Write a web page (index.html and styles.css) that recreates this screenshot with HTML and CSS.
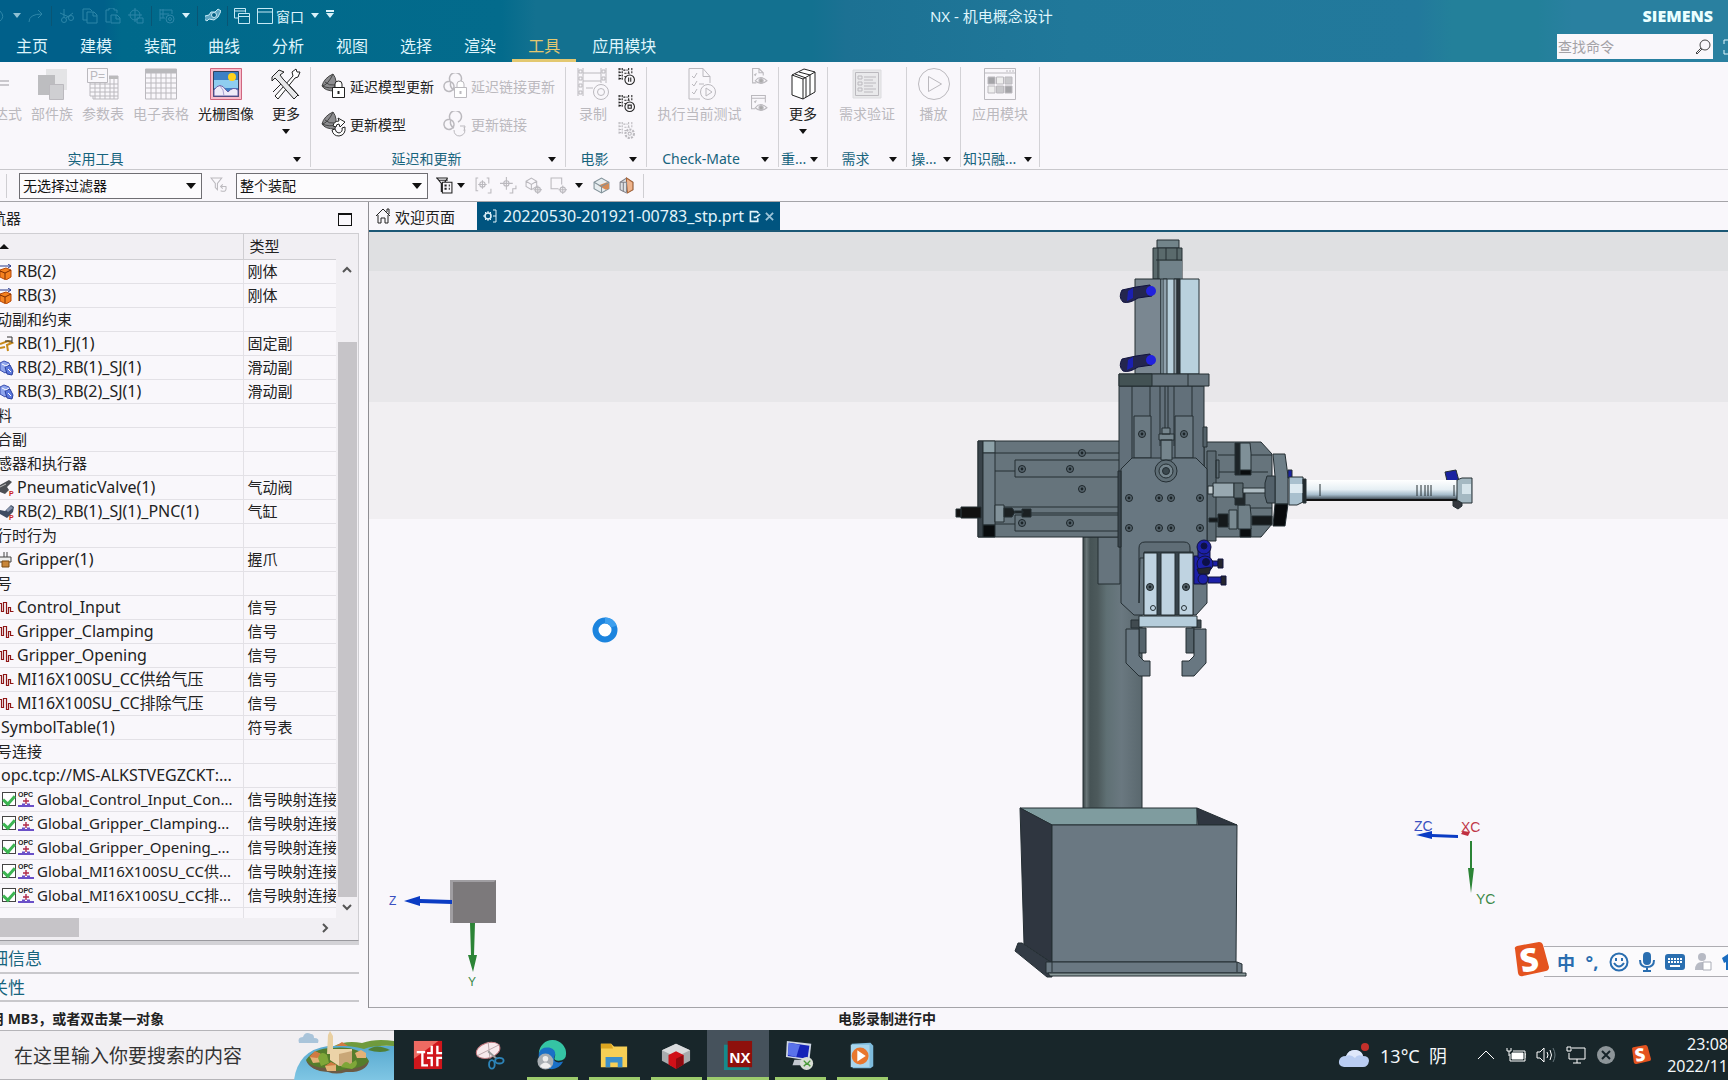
FILE: index.html
```html
<!DOCTYPE html>
<html lang="zh-CN">
<head>
  <meta charset="utf-8">
  <title>NX - 机电概念设计</title>
  <link rel="stylesheet" href="styles.css">
</head>
<body>

  <!-- shared icons -->
  <svg class="defs" width="0" height="0" aria-hidden="true">
    <symbol id="i-body" viewBox="0 0 16 16">
      <path d="M0 2h11M8 0l3 2-3 2" fill="none" stroke="#2b3a8c"/>
      <path d="M0 6l6-2 5 2v7l-5 3-6-3z" fill="#f58220" stroke="#b5480a"/>
      <path d="M0 7l5 2v6M5 9l6-3" fill="none" stroke="#7a2c00"/>
    </symbol>
    <symbol id="i-slide" viewBox="0 0 16 16">
      <path d="M0 3l4-2 5 2 1 6-5 4-5-3z" fill="#8fa5ec" stroke="#3a4fb0"/>
      <path d="M5 7l5-2 3 6-1 4-5-1z" fill="#5b78dd" stroke="#2b3f9c"/>
      <path d="M2 4l4 2 3-2M8 9l3 3" fill="none" stroke="#fff"/>
    </symbol>
    <symbol id="i-signal" viewBox="0 0 16 16">
      <path d="M0 3.500h1.500v8h2v-9h3v11h2v-6h2v4h3" fill="none" stroke="#8e1616" stroke-width="1.200"/>
    </symbol>
    <symbol id="i-opc" viewBox="0 0 16 16">
      <text x="0" y="6">OPC</text>
      <path d="M8 7v6M5 10h6" stroke="#b02a4a" stroke-width="1.400"/>
      <path d="M0 15h16M4 13.500h3M9 13.500h3" stroke="#6a4fc8" stroke-width="2"/>
    </symbol>
    <symbol id="i-film" viewBox="0 0 16 16">
      <path d="M1 0v12M4 0v12M1 1h3M1 4h3M1 7h3M1 10h3M6 5h6M13 0v6M10 0v5M5 2h4M6 8h2" fill="none" stroke="currentColor" stroke-dasharray="2 1"/>
    </symbol>
    <symbol id="i-mass" viewBox="0 0 26 26">
      <path d="M12 1q5 6 2 17Q4 18 1 13q2-8 11-12z" fill="#8d8d90" stroke="#444"/>
      <path d="M1 13q6-1 11-12M4 9q4 4 10 3M1 13q8 3 13 1" fill="none" stroke="#444"/>
    </symbol>
    <symbol id="i-links" viewBox="0 0 26 26">
      <path d="M8 8a6 6 0 1 1 8 3M2 14a5 5 0 1 1 7 4 5 5 0 0 1-7-4zM9 9a6 6 0 0 0 3 8" fill="none" stroke="currentColor" stroke-width="1.500"/>
    </symbol>
  </svg>

  <header class="top">
    <div class="title-row">
      <div class="qat">
        <button class="q-btn undo" aria-label="撤消"><svg viewBox="0 0 16 16"><path d="M10 3q6 6-1 11"/></svg></button>
        <i class="caret dim"></i>
        <button class="q-btn faint" aria-label="重做"><svg viewBox="0 0 16 16"><path d="M1 14Q1 6 14 6M10 2l4 4-4 4"/></svg></button>
        <i class="q-sep"></i>
        <button class="q-btn faint" aria-label="剪切"><svg viewBox="0 0 16 16"><path d="M1 5l9 4M5 1v8"/><circle cx="12" cy="10" r="2.500"/><circle cx="5" cy="12" r="2.500"/><path d="M7 10l7-5"/></svg></button>
        <button class="q-btn faint" aria-label="复制"><svg viewBox="0 0 16 16"><path d="M5 12H1V1h7l2 2M5 4h7l3 3v8H5zM11 4v4h4"/></svg></button>
        <button class="q-btn faint" aria-label="粘贴"><svg viewBox="0 0 16 16"><path d="M5 14H1V2h3V0h5v2h3v3M6 7h6l3 3v5H6zM11 7v4h4"/></svg></button>
        <button class="q-btn faint" aria-label="删除"><svg viewBox="0 0 16 16"><circle cx="7" cy="7" r="5"/><path d="M7 0v14M0 7h14M9 10h6v5H9z"/></svg></button>
        <i class="q-sep"></i>
        <button class="q-btn faint" aria-label="宏"><svg viewBox="0 0 16 16"><path d="M1 1v12M4 1v9M1 2h12v4M1 6h9M1 10h5"/><circle cx="11" cy="11" r="4"/><circle cx="11" cy="11" r="1.500"/></svg></button>
        <i class="caret"></i>
        <i class="q-sep"></i>
        <button class="q-btn" aria-label="触控"><svg viewBox="0 0 16 16"><path d="M0 8l4-1 2-3h4l3-3 3 2-3 6-4 3-5-1-2 2-3-2z" fill="#5fa6c2"/><circle cx="9" cy="7" r="2.500" fill="#045f83"/></svg></button>
        <i class="q-sep tight"></i>
        <button class="q-btn" aria-label="切换窗口"><svg viewBox="0 0 16 16"><path d="M4 10H.5V.5h11v4M.5 3h11M4.500 5.500h11v10h-11zM4.500 8.500h11" /></svg></button>
        <button class="q-btn wide"><svg viewBox="0 0 16 16"><path d="M.5.5h15v15H.5zM.5 4h15"/></svg>窗口</button>
        <i class="caret"></i>
        <i class="caret line"></i>
      </div>
      <h1 class="app-title">NX - 机电概念设计</h1>
      <div class="brand">SIEMENS</div>
    </div>
    <div class="tab-row">
      <nav class="tabs">
        <a href="#">主页</a>
        <a href="#">建模</a>
        <a href="#">装配</a>
        <a href="#">曲线</a>
        <a href="#">分析</a>
        <a href="#">视图</a>
        <a href="#">选择</a>
        <a href="#">渲染</a>
        <a href="#" class="active">工具</a>
        <a href="#">应用模块</a>
      </nav>
      <form class="find">
        <input type="text" placeholder="查找命令" aria-label="查找命令">
        <svg viewBox="0 0 16 16"><circle cx="10" cy="6" r="5"/><path d="M6 9l-5 5 1 1 5-5"/></svg>
      </form>
      <button class="full" aria-label="全屏"><svg viewBox="0 0 16 16"><path d="M5 1H1v4M1 11v4h4"/></svg></button>
    </div>
  </header>

  <section class="ribbon">
    <div class="group g-util">
      <div class="items">
        <button class="big off expr" disabled><svg viewBox="0 0 32 32"><path d="M0 13h32M0 17h32" stroke-width="1.500"/></svg>达式</button>
        <button class="big off" disabled><svg viewBox="0 0 32 32"><path d="M10 1h21v21H10z" fill="#e4e4e6" stroke="none"/><path d="M2 7h17v20H2z" fill="#bdbdc0" stroke="none"/><path d="M13.500 16.500h14v15h-14z" fill="#cfcfd2"/></svg>部件族</button>
        <button class="big off" disabled><svg viewBox="0 0 32 32"><path d="M22 8h9v3h-9z" fill="#bbb" stroke="none"/><path d="M3 12v16h3v3h25V8h-9M3 16h28M3 20h28M3 24h28M6 28h25M8 14v17M13 14v17M18 14v17M23 8v23M27 8v23"/><path d="M.5.5h20v14H.5z" fill="#f9f7fb"/><text x="3" y="12">P=</text></svg>参数表</button>
        <button class="big off" disabled><svg viewBox="0 0 32 32"><path d="M.5 1h31v4H.5z" fill="#b9b9bc"/><path d="M.5 5v26h31V5M.5 10h31M.5 15h31M.5 20h31M.5 25h31M6 5v26M11 5v26M16 5v26M21 5v26M26 5v26"/></svg>电子表格</button>
        <button class="big"><svg viewBox="0 0 32 32"><path d="M.5.5h31v31H.5z" fill="#f8bccb" stroke="#d0667f"/><path d="M3.500 3.500h25v25h-25z" fill="#3d80c4" stroke="#33405c"/><path d="M4 12h24v8H4z" fill="#8fcdf0" stroke="none"/><circle cx="22" cy="9" r="4" fill="#ffd21c" stroke="none"/><path d="M4 28v-6q6-9 12 0 1 1 2 2 5-6 10-2v6z" fill="#eeebf8" stroke="#6a5fa8"/><path d="M10 18q4 3 4 10" stroke="#a9a0d0"/></svg>光栅图像</button>
        <button class="big more"><svg viewBox="0 0 32 32"><path d="M5 28L23 8l-1-4 4-3 1 3 3 0-2 5-3 1L8 31z" fill="#fff"/><path d="M2 9l7-7 5 2-4 3 3 4 15 16-4 4L9 14 5 10 2 13z" fill="#e8e8ea"/><path d="M3 24l8-8M19 17l10 11"/></svg>更多<i class="caret dark"></i></button>
      </div>
      <div class="g-label"><span>实用工具</span><i class="caret dark"></i></div>
    </div>

    <div class="group g-delay">
      <div class="items two">
        <button class="row"><svg viewBox="0 0 26 26"><use href="#i-mass"/><path d="M11.500 14.500h12v10h-12zM14 14v-3q0-3 3.500-3t3.500 3v3" fill="#fff"/><path d="M17.500 18v3" stroke-width="2"/></svg>延迟模型更新</button>
        <button class="row off" disabled><svg viewBox="0 0 26 26"><use href="#i-links"/><path d="M12.500 14.500h12v10h-12zM15 14v-3q0-3 3.500-3t3.500 3v3" fill="#fff"/><path d="M18.500 18v3" stroke-width="2"/></svg>延迟链接更新</button>
        <button class="row"><svg viewBox="0 0 26 26"><use href="#i-mass"/><path d="M12 15q1-5 6-5l-1-3 7 4-5 5-1-3q-3 0-3 3zM24 16q1 8-6 9-6 0-7-6l3-1q1 4 4 4 4-1 3-5z" fill="#fff"/></svg>更新模型</button>
        <button class="row off" disabled><svg viewBox="0 0 26 26"><use href="#i-links"/><path d="M22 16q3 7-4 9-6 0-6-6M18 15l5 0-1 5"/></svg>更新链接</button>
      </div>
      <div class="g-label"><span>延迟和更新</span><i class="caret dark"></i></div>
    </div>

    <div class="group g-movie">
      <div class="items">
        <button class="big off" disabled><svg viewBox="0 0 32 32"><path d="M1 0v28M6 0v28M24 0v15M29 0v15M6 13h18M6 5h18" /><path d="M2 2h3v3H2zM2 9h3v3H2zM2 16h3v3H2zM2 23h3v3H2zM25 2h3v3h-3zM25 9h3v3h-3zM9 20h7"/><circle cx="24" cy="24" r="7.500" fill="#f9f7fb"/><circle cx="24" cy="24" r="3.500"/></svg>录制</button>
        <div class="smalls">
          <button class="small" aria-label="暂停"><svg viewBox="0 0 16 16"><use href="#i-film"/><circle cx="11" cy="11" r="4.500" fill="#f9f7fb"/><path d="M10 9v4M12 9v4"/></svg></button>
          <button class="small" aria-label="停止"><svg viewBox="0 0 16 16"><use href="#i-film"/><circle cx="11" cy="11" r="4.500" fill="#f9f7fb"/><path d="M9.500 9.500h3v3h-3z"/></svg></button>
          <button class="small off" aria-label="设置" disabled><svg viewBox="0 0 16 16"><use href="#i-film"/><circle cx="11" cy="11" r="4" fill="#f9f7fb" stroke-width="2" stroke-dasharray="2 1"/><circle cx="11" cy="11" r="1.500"/></svg></button>
        </div>
      </div>
      <div class="g-label"><span>电影</span><i class="caret dark"></i></div>
    </div>

    <div class="group g-check">
      <div class="items">
        <button class="big off" disabled><svg viewBox="0 0 32 32"><path d="M16 31H5V.5h14l7 8V15M19 .5v8h7M8 8l2 2 3-5M8 16l2 2 3-5M8 24l2 2 3-5M15 16h5"/><circle cx="24" cy="24" r="7.500" fill="#f9f7fb"/><path d="M22 20v8l6-4z"/></svg>执行当前测试</button>
        <div class="smalls">
          <button class="small off" aria-label="查看结果" disabled><svg viewBox="0 0 16 16"><path d="M5 14H1.500V.5h6l4 4V7M7.500.5v4h4M3 6l1 1 1-2"/><path d="M4 12q5-6 11 0-6 5-11 0z" fill="#f9f7fb"/><circle cx="9.500" cy="12" r="2" fill="#aaa"/></svg></button>
          <button class="small off" aria-label="显示结果" disabled><svg viewBox="0 0 16 16"><path d="M4 13H.5V.5h13V7M.5 3h13M3 6l1 1 1-2"/><path d="M4 12q5-6 11 0-6 5-11 0z" fill="#f9f7fb"/><circle cx="9.500" cy="12" r="2" fill="#aaa"/></svg></button>
        </div>
      </div>
      <div class="g-label"><span>Check-Mate</span><i class="caret dark"></i></div>
    </div>

    <div class="group g-reuse">
      <div class="items">
        <button class="big more"><svg viewBox="0 0 32 32"><path d="M5 7L17 1l11 3v20l-12 7L5 27z" fill="#fff"/><path d="M5 7l11 4v20M16 11l12-7M8 6l11 4M12 4l11 3M19 10v19M23 7v20" /></svg>更多<i class="caret dark"></i></button>
      </div>
      <div class="g-label"><span>重...</span><i class="caret dark"></i></div>
    </div>

    <div class="group g-req">
      <div class="items">
        <button class="big off" disabled><svg viewBox="0 0 32 32"><path d="M2 2h28v28H2z" fill="#e9e9eb" stroke="#dcdcdf"/><path d="M4.500 4.500h23v23h-23zM7 8h4v3H7zM7 14h4v3H7zM7 20h4v3H7zM13 9h12M13 12h9M13 15h12M13 18h9M13 21h12M13 24h9"/></svg>需求验证</button>
      </div>
      <div class="g-label"><span>需求</span><i class="caret dark"></i></div>
    </div>

    <div class="group g-play">
      <div class="items">
        <button class="big off" disabled><svg viewBox="0 0 32 32"><circle cx="16" cy="16" r="15.500"/><path d="M10.500 8.500v15l13-7.500z"/></svg>播放</button>
      </div>
      <div class="g-label"><span>操...</span><i class="caret dark"></i></div>
    </div>

    <div class="group g-know">
      <div class="items">
        <button class="big off" disabled><svg viewBox="0 0 32 32"><path d="M.5.5h31v31H.5zM.5 5h31M22 3h2M25 3h2M28 3h2"/><path d="M4 9h7v7H4zM21 18h7v7h-7z" fill="#a4a4a8"/><path d="M12.500 18h7v7h-7z" fill="#c8c8cb"/><path d="M21 9h7v7h-7z" fill="#c8c8cb"/><path d="M12.500 9h7v7h-7zM4 18h7v7H4z" fill="#eee"/></svg>应用模块</button>
      </div>
      <div class="g-label"><span>知识融...</span><i class="caret dark"></i></div>
    </div>
  </section>

  <section class="filters">
    <i class="f-sep"></i>
    <span class="combo"><select aria-label="选择过滤器"><option>无选择过滤器</option></select></span>
    <button class="small off" aria-label="重置过滤器" disabled><svg viewBox="0 0 16 16"><path d="M1 1h10L7 6v6l-2-2V6zM10 13q6 2 5-4l-4 0M12 7l-2 2 2 2"/></svg></button>
    <span class="combo scope"><select aria-label="选择范围"><option>整个装配</option></select></span>
    <div class="f-tools">
      <button class="small" aria-label="常规选择过滤器"><svg viewBox="0 0 16 16"><path d="M0 1h11M1 1l4 5v8M11 1L8 5M3 3h8M6 5h9v10H6z"/><path d="M8 8h2M8 11h2M12 8h1M12 11h1" stroke-width="2"/></svg></button>
      <i class="caret dark"></i>
      <button class="small off" aria-label="选择意图" disabled><svg viewBox="0 0 16 16"><path d="M3 1H1v12h2M11 1h2v5M7 3v8M3 7h8M15 11v4h-3"/><circle cx="7" cy="7" r="2.500"/></svg></button>
      <button class="small off" aria-label="捕捉点" disabled><svg viewBox="0 0 16 16"><path d="M6 0v12M0 6h12M15 8v3h-3v4H9"/><circle cx="6" cy="6" r="2.500"/></svg></button>
      <button class="small off" aria-label="体过滤" disabled><svg viewBox="0 0 16 16"><path d="M1 4l5-3 5 3v5l-5 3-5-3zM1 4l5 3 5-3M6 7v5"/><circle cx="12" cy="12" r="2.500" fill="#eee"/><path d="M12 8v8M8 12h8"/></svg></button>
      <button class="small off" aria-label="矩形选择" disabled><svg viewBox="0 0 16 16"><path d="M8 11H1V1h10v6"/><circle cx="12" cy="12" r="2.500"/><path d="M12 8v8M8 12h8"/></svg></button>
      <i class="caret dark"></i>
    </div>
    <button class="small" aria-label="截面"><svg viewBox="0 0 16 16"><path d="M1 5l7-4 7 4v6l-7 4-7-4z" fill="#e6edf0" stroke="#83929a"/><path d="M5 8l8-3 2 1v5l-3 1z" fill="#d58b55" stroke="none"/><path d="M1 5l7 4v6M8 9l7-4" stroke="#83929a"/></svg></button>
    <button class="small" aria-label="编辑截面"><svg viewBox="0 0 16 16"><path d="M2 5l6-4 6 4v7l-6 3-6-3z" fill="#dfe1e4" stroke="#83838a"/><path d="M8 6V1l6 4v7l-5 3z" fill="#efb48c" stroke="#a8663a"/><path d="M2 5h6v9M5 5v9" stroke="#83838a"/></svg></button>
    <i class="f-sep"></i>
  </section>

  <main class="work">
    <aside class="nav">
      <div class="nav-title"><h2>航器</h2><button aria-label="最大化"></button></div>
      <div class="tree">
        <div class="tree-view">
          <table>
            <colgroup><col class="c-name"><col></colgroup>
            <thead><tr><th><i class="sort"></i></th><th>类型</th></tr></thead>
            <tbody>
              <tr><td><svg><use href="#i-body"/></svg>RB(2)</td><td>刚体</td></tr>
              <tr><td><svg><use href="#i-body"/></svg>RB(3)</td><td>刚体</td></tr>
              <tr class="folder"><td>动副和约束</td><td></td></tr>
              <tr><td><svg viewBox="0 0 16 16"><path d="M0 8l8-3 4 2-5 2 1 6M0 12l5-1" fill="none" stroke="#c78a1a" stroke-width="2"/><path d="M7 1h5v6M5 5h7" fill="none" stroke="#333"/></svg>RB(1)_FJ(1)</td><td>固定副</td></tr>
              <tr><td><svg><use href="#i-slide"/></svg>RB(2)_RB(1)_SJ(1)</td><td>滑动副</td></tr>
              <tr><td><svg><use href="#i-slide"/></svg>RB(3)_RB(2)_SJ(1)</td><td>滑动副</td></tr>
              <tr class="folder"><td>料</td><td></td></tr>
              <tr class="folder"><td>合副</td><td></td></tr>
              <tr class="folder"><td>感器和执行器</td><td></td></tr>
              <tr><td><svg viewBox="0 0 16 16"><path d="M0 5l9-5 3 2-5 5 2 3-4 4-5-2z" fill="#4c4f54"/><path d="M0 7l6-3" stroke="#bbb"/><text class="p" x="9" y="16">P</text></svg>PneumaticValve(1)</td><td>气动阀</td></tr>
              <tr><td><svg viewBox="0 0 16 16"><path d="M0 6l5 1 6-6 3 2-1 5-6 6-7-4z" fill="#3f4d63"/><path d="M6 6l5-4 2 2-5 4z" fill="#8794ad"/><text class="p" x="9" y="16">P</text></svg>RB(2)_RB(1)_SJ(1)_PNC(1)</td><td>气缸</td></tr>
              <tr class="folder"><td>行时行为</td><td></td></tr>
              <tr><td><svg viewBox="0 0 16 16"><path d="M4 0v5M7 0v5M0 5h11v5H0" fill="#eee" stroke="#444"/><path d="M2 9h7v6H2z" fill="#c8853a" stroke="#7a4a12"/></svg>Gripper(1)</td><td>握爪</td></tr>
              <tr class="folder"><td>号</td><td></td></tr>
              <tr><td><svg><use href="#i-signal"/></svg>Control_Input</td><td>信号</td></tr>
              <tr><td><svg><use href="#i-signal"/></svg>Gripper_Clamping</td><td>信号</td></tr>
              <tr><td><svg><use href="#i-signal"/></svg>Gripper_Opening</td><td>信号</td></tr>
              <tr><td><svg><use href="#i-signal"/></svg>MI16X100SU_CC供给气压</td><td>信号</td></tr>
              <tr><td><svg><use href="#i-signal"/></svg>MI16X100SU_CC排除气压</td><td>信号</td></tr>
              <tr class="plain"><td>SymbolTable(1)</td><td>符号表</td></tr>
              <tr class="folder"><td>号连接</td><td></td></tr>
              <tr class="plain"><td>opc.tcp://MS-ALKSTVEGZCKT:...</td><td></td></tr>
              <tr class="link"><td><label><input type="checkbox" checked><svg><use href="#i-opc"/></svg>Global_Control_Input_Con...</label></td><td>信号映射连接</td></tr>
              <tr class="link"><td><label><input type="checkbox" checked><svg><use href="#i-opc"/></svg>Global_Gripper_Clamping...</label></td><td>信号映射连接</td></tr>
              <tr class="link"><td><label><input type="checkbox" checked><svg><use href="#i-opc"/></svg>Global_Gripper_Opening_...</label></td><td>信号映射连接</td></tr>
              <tr class="link"><td><label><input type="checkbox" checked><svg><use href="#i-opc"/></svg>Global_MI16X100SU_CC供...</label></td><td>信号映射连接</td></tr>
              <tr class="link"><td><label><input type="checkbox" checked><svg><use href="#i-opc"/></svg>Global_MI16X100SU_CC排...</label></td><td>信号映射连接</td></tr>
              <tr class="rest"><td></td><td></td></tr>
            </tbody>
          </table>
        </div>
        <div class="vscroll">
          <svg viewBox="0 0 10 8"><path d="M1 6l4-4 4 4"/></svg>
          <div class="v-thumb"></div>
          <svg viewBox="0 0 10 8"><path d="M1 2l4 4 4-4"/></svg>
        </div>
      </div>
      <div class="hscroll"><div class="h-thumb"></div><svg viewBox="0 0 8 10"><path d="M2 1l4 4-4 4"/></svg></div>
      <a href="#" class="fold">细信息</a>
      <a href="#" class="fold">关性</a>
    </aside>

    <section class="doc">
      <div class="doc-tabs">
        <a href="#" class="d-tab"><svg viewBox="0 0 16 16"><path d="M1 8l7-7 7 7M3 7v8h3v-5h4v5h3V7M12 4V1h2v5"/></svg>欢迎页面</a>
        <a href="#" class="d-tab active"><svg viewBox="0 0 16 16"><circle cx="5" cy="8" r="3" stroke-width="1.500"/><path d="M5 3v2M5 11v2M0 8h2M2 4l1 1M2 12l1-1M8 4L7 5M8 12l-1-1M10 2h3v12h-3M10 8h3"/></svg>20220530-201921-00783_stp.prt<svg class="edit" viewBox="0 0 16 16"><path d="M12 10v4H3V2h8l2 2M7 9h3l5-4" stroke-width="2"/></svg><svg class="close" viewBox="0 0 10 10"><path d="M1 1l8 8M9 1L1 9" stroke-width="2"/></svg></a>
      </div>
      <div class="canvas">
        <svg class="scene" viewBox="369 232 1359 774" preserveAspectRatio="xMinYMin meet">
          <defs>
            <linearGradient id="tube" x1="0" x2="0" y1="0" y2="1"><stop offset="0" stop-color="#fff"/><stop offset=".45" stop-color="#e6eff4"/><stop offset=".7" stop-color="#a6bccb"/><stop offset=".88" stop-color="#55626c"/><stop offset=".9" stop-color="#111"/></linearGradient>
            <linearGradient id="post"><stop offset="0" stop-color="#3b4648"/><stop offset=".06" stop-color="#6a7678"/><stop offset=".12" stop-color="#465355"/><stop offset=".25" stop-color="#4d5a5c"/><stop offset=".4" stop-color="#5f7074"/><stop offset=".65" stop-color="#6a7880"/><stop offset="1" stop-color="#5a686e"/></linearGradient>
            <g id="hole"><circle r="3.500" fill="#56646c" stroke="#1c2529"/><circle r="1.400" fill="#1c2529"/></g>
          </defs>
          <g stroke="#242e33" stroke-width="1">
            <!-- post and base box -->
            <path d="M1083 537h59v272h-59z" fill="url(#post)"/>
            <path d="M1098 537h22v47h-22z" fill="#66747d"/>
            <path d="M1020 808h177v17h-145z" fill="#7f9c9f"/>
            <path d="M1197 808l40 17h-39zM1020 808l32 17v138l-28-19z" fill="#2f3640"/>
            <path d="M1015 951l3-8h4l30 20v14h-5z" fill="#333b45"/>
            <path d="M1052 825h185l-1 137h-184z" fill="#6a7882"/>
            <path d="M1046 962h191l5 2v9h-196z" fill="#6a7882"/>
            <path d="M1048 973h198v3h-196z" fill="#8b9a9b"/>
            <path d="M1052 962v10M1237 962v10" fill="none"/>

            <!-- left beam -->
            <path d="M978 441h142v96H978z" fill="#66747c"/>
            <path d="M978 441h5v96h-5z" fill="#39434a"/>
            <path d="M983 441h12v12h-12z" fill="#8ea2a9"/>
            <path d="M983 453h12v72h-12z" fill="#6c7b84"/>
            <path d="M983 525h12v12h-12z" fill="#090c0e"/>
            <path d="M995 453h125M995 471h20M995 507h125M995 524h20M1030 513h90" fill="none"/>
            <path d="M1015 460h105v17h-105zM1015 515h105v16h-105z" fill="#66747c"/>
            <path d="M956 509h5v8h-5zM961 507h20v11h-20z" fill="#111"/>
            <path d="M995 505h9v17h-9z" fill="#82929a"/>
            <path d="M1004 508h8l3 4-3 5h-8zM1015 511h8v2h-8zM1022 509h9v8h-9z" fill="#1b2022"/>

            <!-- right beam -->
            <path d="M1204 442h57l11 12v70l-11 13h-57z" fill="#66747c"/>
            <path d="M1218 455h54M1218 472h18M1250 472h18M1250 508h22M1218 524h18" fill="none"/>
            <path d="M1207 451h9v90h-9zM1216 460h3v18h-3z" fill="#5c6a72"/>
            <path d="M1235 443h5v32h-5z" fill="#1d2428"/>
            <path d="M1240 443h10l1 10v18h-11z" fill="#7f9098"/>
            <path d="M1240 470h11v5h-11zM1240 528h11v9h-11z" fill="#0a0d0f"/>
            <path d="M1238 505h12l1 10v14h-13z" fill="#6f7f87"/>
            <path d="M1235 490h10v15h-10z" fill="#20272a"/>
            <path d="M1213 483h21v14h-21z" fill="#98a8b0"/>
            <path d="M1208 486h5v8h-5z" fill="#c2ccd0"/>
            <path d="M1234 483h9v15h-9z" fill="#5a686e"/>
            <path d="M1243 488h25v5h-25z" fill="#aebcc3"/>
            <path d="M1273 454h12l3 22v28h-13v-28z" fill="#6e7e87"/>
            <path d="M1275 504h13l-3 22h-12z" fill="#080a0c"/>
            <path d="M1267 476h8v27h-8l-2-7v-13z" fill="#53616a"/>
            <path d="M1209 518h9v4h-9zM1218 514h10v13h-10zM1252 516h20v9h-20z" fill="#15191b"/>
            <path d="M1229 510h8v19h-8z" fill="#7a8a92"/>

            <!-- pushed-out cylinder -->
            <path d="M1288 470h4v8h-4zM1445 472l11-2 3 11h-12z" fill="#1a22a0"/>
            <path d="M1306 480h151v21h-151z" fill="url(#tube)" stroke="none"/>
            <path d="M1289 477h14v25l-6 3h-8z" fill="#a9c0ce"/>
            <path d="M1290 484h13v9h-13z" fill="#dce9f0" stroke="none"/>
            <path d="M1303 479h3v24h-3z" fill="#222a2e"/>
            <path d="M1320 484v12M1417 485v11M1421 485v11M1425 485v11M1428 485v11M1431 485v11M1454 485v11" fill="none"/>
            <path d="M1453 501h9v5l-4 3-5-3z" fill="#35383f"/>
            <path d="M1457 480l5-2h10v25h-10l-5-3z" fill="#a4b8c2"/>
            <path d="M1462 484h9v10h-9z" fill="#d5e3ea" stroke="none"/>

            <!-- vertical axis: rod end, cylinder, plate, guide -->
            <path d="M1157 240h22v8h-22z" fill="#72848a"/>
            <path d="M1153 248h29v31h-29z" fill="#5a6a6c"/>
            <path d="M1156 260h26M1158 248v31M1166 248v12M1177 248v12" fill="none"/>
            <path d="M1160 261h22v18h-22z" fill="#71828a" stroke="none"/>
            <path d="M1135 279h26v95h-26z" fill="#7a8791"/>
            <path d="M1161 279h38v95h-38z" fill="#b9d1dd"/>
            <path d="M1163 279h4v95h-4z" fill="#8fa1ac"/>
            <path d="M1174 279h3v95h-3z" fill="#8c9ba4"/>
            <path d="M1177 279h3v95h-3z" fill="#2c343b"/>
            <path d="M1119 386h85v161h-85z" fill="#62707a"/>
            <path d="M1132 386v72M1150 386v30M1160 386v60M1165 386v42M1168 386v42M1174 386v60M1192 386v72" fill="none"/>
            <path d="M1203 427h4v20h-4z" fill="#54626a"/>
            <path d="M1134 416h17v42h-17zM1175 416h18v42h-18z" fill="#6a7982"/>
            <path d="M1119 374h90v12h-90z" fill="#66747d"/>
            <path d="M1119 374h33v12h-33z" fill="#435254"/>
            <path d="M1188 374v12" fill="none"/>

            <!-- front plate -->
            <path d="M1121 469l11-11h64l11 11v134l-11 12h-62l-13-12z" fill="#687781"/>
            <path d="M1118 471h3v76h-3z" fill="#38434a"/>
            <path d="M1162 428h8v6h-8zM1159 434h15v6h-15zM1161 440h11v20h-11z" fill="#75858d"/>
            <circle cx="1166" cy="471" r="11" fill="#5f6e76"/>
            <circle cx="1166" cy="471" r="7" fill="#74848c"/>
            <circle cx="1166" cy="471" r="3.500" fill="#3b484e"/>

            <!-- gripper -->
            <path d="M1139 603v-55q0-6 6-6h39q6 0 6 6v10h-50z" fill="#5f6d76"/>
            <path d="M1144 552h49v63h-49z" fill="#37434b"/>
            <path d="M1144 553h13v62h-13zM1161 553h14v62h-14zM1179 553h14v62h-14z" fill="#bfd3e1"/>
            <path d="M1131 620h9v8h-9zM1192 620h9v8h-9z" fill="#414b50"/>
            <path d="M1139 628h7v25h-7zM1186 628h8v25h-8z" fill="#55636b"/>
            <path d="M1139 616h58v11h-58z" fill="#b6cddb"/>
            <path d="M1126 629h13v27l5 5h6v15h-11l-13-13zM1206 629h-12v27l-5 5h-7v15h12l12-13z" fill="#687781"/>
            <circle cx="1153" cy="608" r="2.500" fill="none"/>
            <circle cx="1184" cy="608" r="2.500" fill="none"/>

            <!-- push-in fittings -->
            <g fill="#1c20a8" stroke="#11133f">
              <path d="M1150 285l-14 2-14 3q-4 7 1 12 6 2 15-4l14-2z" fill="#24264f"/>
              <circle cx="1151" cy="291" r="5" stroke="none" fill="#2222dd"/>
              <path d="M1128 291l5-3v10l-6 3z" stroke="none" fill="#1a1fb0"/>
              <path d="M1150 354l-14 2-14 3q-4 7 1 12 6 2 15-4l14-2z" fill="#24264f"/>
              <circle cx="1151" cy="360" r="5" stroke="none" fill="#2222dd"/>
              <path d="M1128 360l5-3v10l-6 3z" stroke="none" fill="#1a1fb0"/>
              <path d="M1194 556h12v28h-12zM1208 561h10v5h-10zM1208 577h15v6h-15z"/>
              <path d="M1198 546h12v12h-12z"/>
              <circle cx="1204" cy="547" r="7"/>
              <circle cx="1205" cy="564" r="8"/>
              <circle cx="1203" cy="579" r="5"/>
              <path d="M1218 559h5v9h-5zM1221 576h5v9h-5zM1197 569l14-2-2 7h-10z" fill="#25262e"/>
              <circle cx="1204" cy="546" r="3" fill="#0c0f4a"/>
              <circle cx="1206" cy="562" r="3.500" fill="#0c0f4a"/>
            </g>
          </g>
          <use href="#hole" x="1142" y="434"/><use href="#hole" x="1184" y="434"/>
          <use href="#hole" x="1082" y="453"/><use href="#hole" x="1082" y="489"/>
          <use href="#hole" x="1022" y="469"/><use href="#hole" x="1070" y="469"/>
          <use href="#hole" x="1022" y="523"/><use href="#hole" x="1070" y="523"/>
          <use href="#hole" x="1129" y="498"/><use href="#hole" x="1159" y="498"/><use href="#hole" x="1171" y="498"/><use href="#hole" x="1200" y="498"/>
          <use href="#hole" x="1129" y="528"/><use href="#hole" x="1159" y="528"/><use href="#hole" x="1171" y="528"/><use href="#hole" x="1200" y="528"/>
          <use href="#hole" x="1150" y="587"/><use href="#hole" x="1186" y="587"/>

          <!-- view triad -->
          <path d="M450 880h46v43h-46z" fill="#7c797b"/>
          <path d="M450 880h46l-2 2h-41v41h-3z" fill="#a09ea2"/>
          <path d="M404 901l16-5v3l32 1v4l-32-1v3z" fill="#0b3cc4"/>
          <path d="M470 923h5l-1 32h3l-4 17-5-17h3z" fill="#2c8436"/>
          <text x="389" y="905" class="z small-t">Z</text>
          <text x="468" y="986" class="y small-t">Y</text>

          <!-- work coordinate system -->
          <path d="M1416 835l16-4v3l26 1v3l-26-1v2z" fill="#0b3cc4"/>
          <path d="M1463 831l7 1-2 4-7-2z" fill="#c03040"/>
          <path d="M1470 841h2v27h2l-3 25-3-25h2z" fill="#2c8436"/>
          <text x="1414" y="831" class="z">ZC</text>
          <text x="1461" y="832" class="x">XC</text>
          <text x="1476" y="904" class="y">YC</text>

          <!-- busy pointer -->
          <circle cx="605" cy="630" r="9.500" fill="#fff" stroke="#1c84de" stroke-width="6"/>
          <path d="M605 620.500a9.500 9.500 0 0 1 9 6" fill="none" stroke="#3d9fee" stroke-width="6"/>
        </svg>

        <div class="ime">
          <svg class="ime-logo" viewBox="0 0 36 36"><path d="M2 7Q1 5 4 4L26 0q3 0 4 3l6 22q0 3-3 4L10 34q-4 1-5-3z" fill="#e4531f"/><text x="7" y="29" transform="rotate(-10 18 18)">S</text></svg>
          <button class="zh">中</button>
          <button class="punct">°,</button>
          <button aria-label="表情"><svg viewBox="0 0 20 20"><circle cx="10" cy="10" r="8.500"/><path d="M7 6v3M13 6v3M5 11q5 7 10 0"/></svg></button>
          <button aria-label="语音"><svg viewBox="0 0 20 20"><rect x="7" y="1" width="6" height="11" rx="3" fill="#2a6eb0"/><path d="M3 8q0 7 7 7t7-7M10 15v4M6 19h8"/></svg></button>
          <button aria-label="软键盘"><svg viewBox="0 0 20 20"><rect x="1" y="3" width="18" height="14" rx="2" fill="#2a6eb0"/><path d="M3 7h14M3 10h14" stroke="#fff" stroke-dasharray="2 1"/><path d="M5 14h10" stroke="#fff"/></svg></button>
          <button aria-label="账户"><svg viewBox="0 0 20 20"><circle cx="9" cy="5" r="4" fill="#b7bac4" stroke="none"/><path d="M2 18q0-8 7-8t7 8z" fill="#b7bac4" stroke="none"/><path d="M10 10h8v8h-8z" fill="#fff" stroke="#a9acb6" stroke-width="1"/></svg></button>
          <button aria-label="皮肤"><svg viewBox="0 0 20 20"><path d="M1 6l6-4q3 2 6 0l6 4-2 5-2-1v8H5v-8l-2 1z" fill="#1a6cc0" stroke="none"/></svg></button>
        </div>
      </div>
    </section>
  </main>

  <footer class="status">
    <span class="hint">用 MB3，或者双击某一对象</span>
    <span class="msg">电影录制进行中</span>
  </footer>

  <div class="taskbar">
    <div class="search">
      <input type="text" placeholder="在这里输入你要搜索的内容" aria-label="搜索">
      <svg viewBox="0 0 100 49">
        <defs><linearGradient id="sea" x1="0" x2="0" y1="0" y2="1"><stop offset="0" stop-color="#58a9cf"/><stop offset="1" stop-color="#7fc6e4"/></linearGradient></defs>
        <path d="M0 49q4-30 34-34h66v34z" fill="url(#sea)"/>
        <path d="M40 15q12-6 28-3 14-5 32-2v5q-20-1-30 3-16-4-30-3z" fill="#6f9a3d"/>
        <path d="M74 19q8-7 22 0-9 4-22 0z" fill="#4f7f35"/>
        <path d="M12 29q8-12 26-12 28-3 37 13-4 9-24 9-8 4-18 1-16 0-21-11z" fill="#557d2c"/>
        <path d="M12 29q6 8 20 8 10 5 20 1 16 0 23-8-3 12-23 11-10 3-18 0-18-1-22-12z" fill="#6b5a44"/>
        <path d="M34 4l2-4 3 5v18h-6z" fill="#e9d0a2"/><path d="M36 18h22v15l-13 2-9-6z" fill="#ecd3a8"/><path d="M45 23l13-3v13l-13 2z" fill="#c9a777"/>
        <path d="M16 26l6-5 7 3v7l-10 1zM31 35l7-3 4 2v6h-9zM61 22l6-3 5 3v5h-9z" fill="#e3b277"/>
        <path d="M15 26l6-6 8 4-6 3zM42 15l6-4 6 4zM31 35l6-4 6 3z" fill="#d07a42"/>
        <path d="M24 27q3-8 9-3l2 8-8 3zM47 36q4-8 9-3l6-4q3 6-4 9z" fill="#7fa638"/>
        <path d="M5 12q-2-6 4-6 2-6 8-3 3 0 3 4 6 0 4 5z" fill="#a9c4da"/>
      </svg>
    </div>
    <div class="apps">
      <button aria-label="TIA"><svg viewBox="0 0 32 32"><path d="M1 1h30v30H1z" fill="#d0161c"/><path d="M1 1h26L1 20z" fill="#ee6a62"/><path d="M4 13h9M10 13v14h6M20 6v8h-5M26 6v8h5M20 28v-9h-5M26 28v-9h5" stroke="#fff" stroke-width="2.500" fill="none"/></svg></button>
      <button aria-label="截图工具"><svg viewBox="0 0 32 32"><ellipse cx="14" cy="11" rx="13" ry="8" transform="rotate(-18 14 11)" fill="#f7e9ec" stroke="#c77a80"/><path d="M2 17l24-12M14 2l2 18" stroke="#b9a3a8"/><path d="M14 12l9 8" stroke="#999" stroke-width="2"/><ellipse cx="18" cy="26" rx="3" ry="4.500" fill="none" stroke="#2d84b8" stroke-width="2"/><ellipse cx="26" cy="22" rx="4.500" ry="3" fill="none" stroke="#2d84b8" stroke-width="2"/></svg></button>
      <button class="open" aria-label="Edge"><svg viewBox="0 0 32 32"><path d="M2 14A14 14 0 0 1 31 15q0 7-8 7-6 0-4-4 2-6-6-7Q6 10 2 14z" fill="#35c4a4"/><path d="M2 14q2-7 11-6 8 2 6 9-3 6 4 7l5-1q-5 9-14 8Q0 28 2 14z" fill="#1a70c6"/><circle cx="9" cy="23" r="8.500" fill="#a7adb2"/><circle cx="9" cy="20" r="3" fill="#eee"/><path d="M3 28q6-8 12 0-6 5-12 0z" fill="#eee"/></svg></button>
      <button class="open" aria-label="文件资源管理器"><svg viewBox="0 0 32 32"><path d="M2 4h11l3 3h14v22H2z" fill="#f7cf55"/><path d="M2 4h11l2 5H2z" fill="#dca520"/><path d="M7 29V18h18v11h-5v-5h-8v5z" fill="#3b8fcb"/></svg></button>
      <button class="open" aria-label="仿真"><svg viewBox="0 0 32 32"><path d="M16 4l15 7v11l-15 8L1 22V11z" fill="#a8abae"/><path d="M1 11l15-7 15 7-15 7z" fill="#d9dbdd"/><path d="M16 12l8 4v10l-8 5-8-5V16z" fill="#d01018"/><path d="M16 20l8-4v10l-8 5z" fill="#8e0a10"/></svg></button>
      <button class="open current" aria-label="NX"><svg viewBox="0 0 32 32"><path d="M1 5h27v27H1z" fill="#168a8c"/><path d="M5 1h26v28H5z" fill="#8e100c"/><text x="7" y="24">NX</text></svg></button>
      <button class="open" aria-label="远程桌面"><svg viewBox="0 0 32 32"><path d="M2 1l26 3-2 18-25-4z" fill="#cfd6e4"/><path d="M4 3l22 3-2 14-21-3z" fill="#1522b8"/><path d="M4 3l12 2-4 13-9-2z" fill="#5a72ea"/><path d="M10 21h10l1 6H8z" fill="#c3c8d0"/><circle cx="23" cy="25" r="7" fill="#d9ded6"/><path d="M20 22l3 3-3 3M27 22l-3 3 3 3" stroke="#4a9a3a" fill="none" stroke-width="1.500"/></svg></button>
      <button class="open" aria-label="播放器"><svg viewBox="0 0 32 32"><path d="M5 4l20-1 3 3v22l-3 2H6z" fill="#7ebbdc"/><path d="M4 5h20v24H4z" fill="#a9d5ec"/><circle cx="14" cy="17" r="9" fill="#e9772e"/><path d="M11 11v12l9-6z" fill="#fff"/></svg></button>
    </div>
    <div class="tray">
      <a href="#" class="weather"><svg viewBox="0 0 32 32"><path d="M6 28q-6-1-5-6t7-5q3-7 10-6 6 1 7 6 6 0 6 5-1 6-6 6z" fill="#b9cdf2"/><path d="M8 17q3-7 10-6 6 1 7 6-6-2-8 2-4-4-9-2z" fill="#dfe8fb"/><circle cx="27" cy="8" r="4" fill="#c4302b"/></svg>13°C&nbsp; 阴</a>
      <button aria-label="显示隐藏的图标"><svg viewBox="0 0 20 20"><path d="M2 14l8-8 8 8"/></svg></button>
      <button aria-label="电源"><svg viewBox="0 0 20 20"><path d="M6 8h11v6H6z" fill="#fff"/><path d="M4 9v7h15V6H7M19 9h1v4M1 3v3h4V3M3 6v5"/></svg></button>
      <button aria-label="音量"><svg viewBox="0 0 20 20"><path d="M1 7v6h3l4 4V3L4 7zM11 7q2 3 0 6M14 5q3 5 0 10"/><path d="M17 3q4 7 0 14" stroke="#66757b"/></svg></button>
      <button aria-label="网络"><svg viewBox="0 0 20 20"><path d="M6 3h13v11H3V8M11 14v4M7 18h8M1 2h4v4H1z"/></svg></button>
      <button aria-label="未连接"><svg viewBox="0 0 20 20"><circle cx="10" cy="10" r="9" fill="#8d9599" stroke="none"/><path d="M6 6l8 8M14 6l-8 8" stroke="#17242a" stroke-width="2"/></svg></button>
      <button class="sogou" aria-label="输入法"><svg viewBox="0 0 36 36"><path d="M2 7Q1 5 4 4L26 0q3 0 4 3l6 22q0 3-3 4L10 34q-4 1-5-3z" fill="#e4531f"/><text x="7" y="29" transform="rotate(-10 18 18)">S</text></svg></button>
      <div class="clock"><time>23:08</time><time>2022/11</time></div>
    </div>
  </div>

</body>
</html>
```

FILE: styles.css
```css
* {
  box-sizing: border-box;
}
body {
  margin: 0;
  height: 100vh;
  display: flex;
  flex-direction: column;
  overflow: hidden;
  background: #f9f7fb;
  color: #222;
  font-family: "Noto Sans", "Noto Sans CJK SC", sans-serif;
  font-size: 14px;
}
button {
  padding: 0;
  border: 0;
  background: none;
  color: inherit;
  font: inherit;
}
a {
  color: inherit;
  text-decoration: none;
}
svg {
  display: block;
  flex: none;
}
.defs {
  position: absolute;
}

/* small drop-down arrow */
.caret {
  flex: none;
  width: 0;
  height: 0;
  border: 4px solid transparent;
  border-top: 5px solid #d9f2fa;
  border-bottom: 0;
}
.caret.dark {
  border-top-color: #111;
}
.caret.dim {
  border-top-color: #8fc0d3;
}

/* title bar */
.top {
  flex: none;
  color: #dff5fc;
  background: linear-gradient(to right, #00608a 0, #00608a 6%, #00698b 7%, #036b8c 29%, #137190 31%, #137190 47%, #1c7193 49%, #20789a 62%, #22799c 82%, #23809a 84%, #23809a 89%, #2980a0 91%);
}
.title-row,
.tab-row {
  display: flex;
  align-items: center;
  height: 31px;
}
.qat {
  display: flex;
  align-items: center;
  gap: 7px;
  width: 340px;
}
.q-btn svg {
  width: 16px;
  height: 16px;
  fill: none;
  stroke: #c5e9f5;
}
.q-btn.faint svg {
  stroke: #2d86a8;
}
.undo {
  width: 6px;
  overflow: hidden;
}
.undo svg {
  margin-left: -10px;
  stroke: #2d86a8;
}
.q-btn.wide {
  display: flex;
  align-items: center;
  gap: 3px;
}
.q-sep {
  width: 1px;
  height: 20px;
  background: #0a5574;
}
.q-sep.tight {
  margin: 0 -1px;
}
.caret.line {
  position: relative;
}
.caret.line::before {
  content: "";
  position: absolute;
  left: -4px;
  top: -8px;
  width: 8px;
  height: 2px;
  background: #d9f2fa;
}
.app-title {
  flex: 1;
  margin: 0;
  text-align: center;
  font-size: 15px;
  font-weight: 400;
}
.brand {
  padding-right: 15px;
  font: 900 16px "Open Sans", sans-serif;
  color: #eaffff;
}
.tabs {
  display: flex;
  flex: 1;
  height: 31px;
}
.tabs a {
  padding: 0 16px;
  font-size: 16px;
  line-height: 30px;
  border-bottom: 3px solid transparent;
}
.tabs .active {
  color: #e3c870;
  border-color: #e3c870;
}
.find {
  display: flex;
  align-items: center;
  width: 156px;
  height: 25px;
  background: #f9f7fb;
}
.find input {
  flex: 1;
  min-width: 0;
  padding: 0 1px;
  border: 0;
  outline: 0;
  background: none;
  font: inherit;
}
.find input::placeholder {
  color: #a3a1a6;
}
.find svg {
  width: 16px;
  height: 16px;
  margin-right: 2px;
  fill: none;
  stroke: #444;
}
.full {
  width: 15px;
  padding-left: 10px;
  overflow: hidden;
}
.full svg {
  width: 16px;
  height: 16px;
  fill: none;
  stroke: #dff5fc;
}

/* ribbon */
.ribbon {
  flex: none;
  display: flex;
  height: 108px;
  padding: 5px 0 2px;
  border-bottom: 1px solid #c9c8cc;
}
.group {
  display: flex;
  flex-direction: column;
  justify-content: space-between;
  border-right: 1px solid #d3d2d6;
}
.g-util { width: 311px; }
.g-delay { width: 255px; }
.g-movie { width: 81px; }
.g-check { width: 132px; }
.g-reuse { width: 49px; }
.g-req { width: 79px; }
.g-play { width: 54px; }
.g-know { width: 79px; }
.items {
  display: flex;
  justify-content: center;
  align-items: flex-start;
  gap: 9px;
}
.g-util .items {
  justify-content: flex-start;
}
.big {
  display: flex;
  flex-direction: column;
  align-items: center;
  gap: 4px;
  line-height: 20px;
  white-space: nowrap;
}
.big svg {
  width: 32px;
  height: 32px;
  margin-top: 1px;
}
.big svg,
.row svg,
.small svg {
  fill: none;
  stroke: currentColor;
}
.big text {
  font: 12px "Liberation Sans", sans-serif;
  fill: currentColor;
  stroke: none;
}
.big.expr {
  width: 22px;
  align-items: flex-end;
}
.expr svg {
  margin-right: 13px;
}
.big.more {
  width: 46px;
}
.more .caret {
  margin-top: 1px;
}
.off {
  color: #bbb9be;
}
.items.two {
  display: grid;
  grid-template-columns: auto auto;
  justify-content: center;
  gap: 12px 8px;
  padding-top: 6px;
}
.row {
  display: flex;
  align-items: center;
  gap: 3px;
}
.row svg {
  width: 26px;
  height: 26px;
}
.smalls {
  display: flex;
  flex-direction: column;
  gap: 10px;
  padding-top: 1px;
}
.small svg {
  width: 17px;
  height: 17px;
}
.g-label {
  display: flex;
  align-items: center;
  justify-content: space-between;
  padding: 0 9px 0 2px;
  line-height: 16px;
  color: #17647d;
}
.g-label span {
  flex: 1;
  padding-right: 8px;
  text-align: center;
  white-space: nowrap;
}
.g-util .g-label span {
  padding-right: 104px;
}
.g-reuse .g-label span,
.g-play .g-label span {
  padding-right: 4px;
}

/* selection bar */
.filters {
  flex: none;
  display: flex;
  align-items: center;
  gap: 8px;
  height: 32px;
  padding-left: 6px;
  border-bottom: 1px solid #a5a4a8;
}
.f-sep {
  width: 1px;
  height: 24px;
  background: #cfced2;
}
.combo {
  position: relative;
  width: 183px;
  margin-left: 4px;
}
.combo.scope {
  width: 192px;
  margin-left: 1px;
}
.combo select {
  appearance: none;
  width: 100%;
  height: 26px;
  padding: 0 3px;
  border: 1px solid #6f6e73;
  border-radius: 0;
  background: #fcfbfd;
  color: #111;
  font: inherit;
}
.combo::after {
  content: "";
  position: absolute;
  right: 6px;
  top: 10px;
  border: 5px solid transparent;
  border-top: 6px solid #111;
  border-bottom: 0;
}
.f-tools {
  display: flex;
  align-items: center;
  gap: 8px;
}
.f-tools .caret {
  margin: 0 2px 0 -4px;
}
.f-tools .caret:last-child {
  margin: 0 2px 0 0;
}

/* work area */
.work {
  flex: 1;
  min-height: 0;
  display: flex;
}
.nav {
  flex: none;
  display: flex;
  flex-direction: column;
  width: 369px;
  padding-right: 9px;
  border-right: 1px solid #8f8e93;
  overflow: hidden;
}
.nav-title {
  display: flex;
  justify-content: space-between;
  align-items: center;
  height: 31px;
}
.nav-title h2 {
  margin: 0 0 0 -9px;
  font-size: 15px;
  font-weight: 400;
}
.nav-title button {
  width: 14px;
  height: 13px;
  margin-right: 7px;
  margin-top: 4px;
  border: 1px solid #111;
  border-top-width: 2px;
}
.tree {
  flex: 1;
  min-height: 0;
  display: flex;
  border: 1px solid #cfced2;
  border-width: 1px 1px 0 0;
}
.tree-view {
  flex: 1;
  overflow: hidden;
}
.tree table {
  width: 336px;
  border-collapse: collapse;
  table-layout: fixed;
  font-size: 15px;
}
.c-name {
  width: 243px;
}
.tree th,
.tree td {
  height: 24px;
  padding: 0 0 0 4px;
  border-bottom: 1px solid #e3e1e6;
  border-right: 1px solid #e3e1e6;
  line-height: 20px;
  text-align: left;
  font-weight: 400;
  white-space: nowrap;
  overflow: hidden;
}
.tree td:first-child,
.tree th:first-child {
  padding-left: 0;
}
.tree td:first-child {
  font-size: 16px;
}
.tree .folder td:first-child,
.tree .link td:first-child {
  font-size: 15px;
}
.tree td:last-child,
.tree th:last-child {
  border-right: 0;
}
.tree th {
  height: 25px;
  padding-left: 6px;
  background: #f1eff3;
  border-color: #cfced2;
}
.tree .rest td {
  height: 11px;
  border-bottom: 0;
}
.sort {
  display: block;
  width: 0;
  border: 5px solid transparent;
  border-bottom-color: #111;
  border-top: 0;
  margin-left: -1px;
}
.tree td svg {
  display: inline-block;
  width: 16px;
  height: 16px;
  margin-right: 1px;
  vertical-align: -3px;
}
#i-opc text,
.tree .p {
  font: 700 7px "Liberation Sans", sans-serif;
  fill: #222;
}
.tree .p {
  fill: #c22;
}
.tree .folder td:first-child {
  text-indent: -3px;
}
.tree .plain td:first-child {
  padding-left: 1px;
}
.link label {
  display: flex;
  align-items: center;
  gap: 2px;
  padding-left: 2px;
}
.link input {
  appearance: none;
  display: grid;
  place-items: center;
  width: 14px;
  height: 14px;
  margin: 0;
  border: 1px solid #444;
  background: #fff;
}
.link input:checked::after {
  content: "";
  width: 5px;
  height: 9px;
  margin-bottom: 2px;
  border: solid #3cb552;
  border-width: 0 3px 3px 0;
  transform: rotate(42deg);
}
.vscroll {
  display: flex;
  flex-direction: column;
  justify-content: space-between;
  align-items: center;
  width: 22px;
  padding: 32px 0 7px;
  background: #f1eff3;
}
.vscroll svg {
  width: 10px;
  height: 8px;
}
.vscroll svg,
.hscroll svg {
  fill: none;
  stroke: #555;
  stroke-width: 2;
}
.v-thumb {
  width: 19px;
  height: 86%;
  margin-top: auto;
  margin-bottom: 6px;
  background: #c6c4c8;
}
.hscroll {
  display: flex;
  align-items: center;
  justify-content: space-between;
  height: 23px;
  padding: 0 29px 3px 0;
  background: #f1eff3;
  border-right: 1px solid #cfced2;
  border-bottom: 1px solid #9a999e;
}
.hscroll svg {
  width: 8px;
  height: 10px;
}
.h-thumb {
  width: 79px;
  height: 19px;
  background: #c6c4c8;
}
.fold {
  height: 28px;
  text-indent: -9px;
  border-bottom: 2px solid #c9c8cc;
  font-size: 17px;
  line-height: 27px;
  color: #17647d;
}
.hscroll + .fold {
  height: 33px;
  border-top: 4px solid #d3d2d6;
}
.fold:last-child {
  margin-bottom: 6px;
}

/* document */
.doc {
  flex: 1;
  min-width: 0;
  display: flex;
  flex-direction: column;
}
.doc-tabs {
  display: flex;
  height: 30px;
  border-bottom: 2px solid #1b5875;
}
.d-tab {
  display: flex;
  align-items: center;
  gap: 4px;
  width: 108px;
  padding-left: 6px;
  font-size: 15px;
  white-space: nowrap;
}
.d-tab.active {
  width: auto;
  padding: 0 6px;
  background: #00547f;
  color: #e3f4fb;
  font-size: 16px;
}
.d-tab svg {
  width: 16px;
  height: 16px;
  fill: none;
  stroke: currentColor;
}
.d-tab .edit {
  width: 13px;
  height: 13px;
}
.d-tab .close {
  width: 9px;
  height: 9px;
  stroke: #9cc4d8;
}
.canvas {
  flex: 1;
  min-height: 0;
  position: relative;
  overflow: hidden;
  background: linear-gradient(#dfe0e2 5%, #e8e7ea 5%, #e8e7ea 22%, #f1eff2 22%, #f1eff2 37%, #f9f7fb 37%);
  border-bottom: 1px solid #a5a4a8;
}
.scene {
  width: 100%;
  height: 100%;
}
.scene text {
  font: 14px "Liberation Sans", sans-serif;
}
.scene .small-t {
  font-size: 12px;
}
.scene .x { fill: #c03848; }
.scene .y { fill: #3c8a48; }
.scene .z { fill: #3a50c0; }

/* floating input-method bar */
.ime {
  position: absolute;
  right: 0;
  bottom: 30px;
  display: flex;
  align-items: center;
  gap: 8px;
  width: 184px;
  height: 31px;
  padding-left: 13px;
  border: 1px solid #aeadb2;
  border-width: 1px 0;
  background: #fbfafc;
}
.ime-logo {
  position: absolute;
  left: -31px;
  bottom: -2px;
  width: 36px;
  height: 36px;
}
.ime-logo text,
.sogou text {
  font: 900 32px "Open Sans", sans-serif;
  fill: #fff;
}
.ime button {
  flex: none;
  color: #2a6eb0;
}
.ime button svg {
  width: 20px;
  height: 20px;
  fill: none;
  stroke: #2a6eb0;
  stroke-width: 2;
}
.ime .zh,
.ime .punct {
  width: 18px;
  font-size: 18px;
  font-weight: 700;
}

/* status line */
.status {
  flex: none;
  display: flex;
  align-items: center;
  height: 22px;
  padding-bottom: 2px;
  font-weight: 700;
  white-space: nowrap;
}
.hint {
  width: 848px;
  margin-left: -10px;
}

/* windows taskbar */
.taskbar {
  flex: none;
  display: flex;
  height: 50px;
  background: #18262a;
  color: #f2f6f8;
}
.search {
  display: flex;
  width: 394px;
  background: #f1eff2;
  border-top: 1px solid #b5b4b8;
  border-bottom: 1px solid #b5b4b8;
}
.search input {
  flex: 1;
  min-width: 0;
  padding: 0 0 2px 14px;
  border: 0;
  outline: 0;
  background: none;
  font: 19px "Noto Sans CJK SC", sans-serif;
}
.search input::placeholder {
  color: #333;
}
.search svg {
  width: 100px;
  height: 49px;
}
.apps {
  display: flex;
  flex: 1;
  padding-left: 3px;
}
.apps button {
  position: relative;
  display: grid;
  place-items: center;
  width: 62px;
}
.apps svg {
  width: 30px;
  height: 30px;
}
.apps text {
  font: 700 16px "Liberation Sans", sans-serif;
  fill: #fff;
}
.apps .open::after {
  content: "";
  position: absolute;
  left: 6px;
  right: 5px;
  bottom: 0;
  height: 3px;
  background: #9ccb6c;
}
.apps .current {
  background: #46525c;
}
.apps .current::after {
  left: 0;
  right: 0;
}
.tray {
  display: flex;
  align-items: center;
  gap: 10px;
}
.tray svg {
  width: 20px;
  height: 20px;
  fill: none;
  stroke: #fff;
}
.weather {
  display: flex;
  align-items: center;
  gap: 10px;
  margin-right: 19px;
  font-size: 18px;
}
.tray .weather svg {
  width: 32px;
  height: 32px;
  stroke: none;
}
.tray .sogou {
  margin-left: 5px;
}
.tray .sogou svg {
  stroke: none;
}
.clock {
  display: flex;
  flex-direction: column;
  align-items: flex-end;
  margin-left: 6px;
  font-size: 16px;
  line-height: 22px;
}
```
